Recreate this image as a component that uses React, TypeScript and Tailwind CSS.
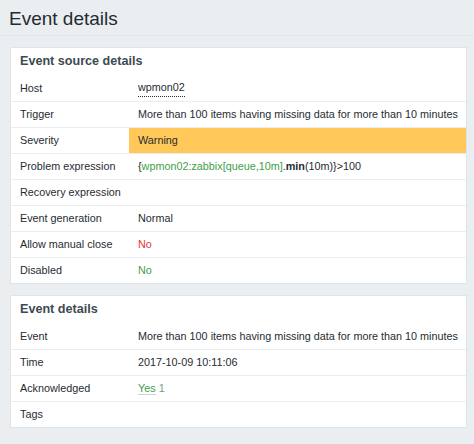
import React from 'react';

type Row = { label: string; value?: React.ReactNode; cellClass?: string };

const sourceRows: Row[] = [
  {
    label: 'Host',
    value: <span className="border-b border-dotted border-[#1f2c33]">wpmon02</span>,
  },
  { label: 'Trigger', value: 'More than 100 items having missing data for more than 10 minutes' },
  { label: 'Severity', value: 'Warning', cellClass: 'bg-[#ffc859]' },
  {
    label: 'Problem expression',
    value: (
      <span>
        {'{'}
        <span className="text-[#429e47]">wpmon02:zabbix[queue,10m]</span>.<span className="font-bold">min</span>(10m)
        {'}'}&gt;100
      </span>
    ),
  },
  { label: 'Recovery expression' },
  { label: 'Event generation', value: 'Normal' },
  { label: 'Allow manual close', value: <span className="text-[#e33734]">No</span> },
  { label: 'Disabled', value: <span className="text-[#429e47]">No</span> },
];

const eventRows: Row[] = [
  { label: 'Event', value: 'More than 100 items having missing data for more than 10 minutes' },
  { label: 'Time', value: '2017-10-09 10:11:06' },
  {
    label: 'Acknowledged',
    value: (
      <span>
        <span className="text-[#429e47] border-b border-[#c9d2d6]">Yes</span>{' '}
        <span className="text-[#7a9a80]">1</span>
      </span>
    ),
  },
  { label: 'Tags' },
];

function Card({ title, rows }: { title: string; rows: Row[] }) {
  return (
    <div className="bg-white border border-[#dfe4e7] ml-[10px] mr-[7px]">
      <div className="h-[27px] flex items-center pl-[9px] text-[12.6px] font-bold text-[#3d4a52]">{title}</div>
      {rows.map((r, i) => (
        <div key={r.label} className={`flex h-[26px] ${i > 0 ? 'border-t border-[#ebeef0]' : ''}`}>
          <div className="w-[118px] shrink-0 pl-[9px] flex items-center">{r.label}</div>
          <div className={`flex-1 pl-[9px] flex items-center whitespace-nowrap ${r.cellClass ?? ''}`}>{r.value}</div>
        </div>
      ))}
    </div>
  );
}

export default function App() {
  return (
    <div className="w-[474px] h-[444px] bg-[#ebeef0] text-[#1f2c33] text-[10.8px] font-['Liberation_Sans',Arial,sans-serif] overflow-hidden">
      <div className="h-[36px] flex items-center pl-[9px] pt-[2px] border-b border-[#e2e6e9]">
        <h1 className="text-[19px] leading-none text-[#1f2c33]">Event details</h1>
      </div>
      <div className="pt-[11px] flex flex-col gap-[11px]">
        <Card title="Event source details" rows={sourceRows} />
        <Card title="Event details" rows={eventRows} />
      </div>
    </div>
  );
}
